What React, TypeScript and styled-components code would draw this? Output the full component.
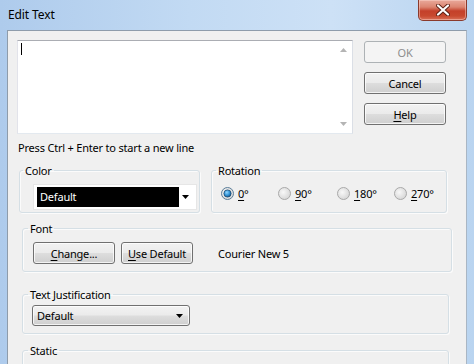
import React from "react";
import styled, { createGlobalStyle } from "styled-components";

const Global = createGlobalStyle`
  html, body { margin: 0; padding: 0; background: #fff; }
  body {
    font-family: "Noto Sans", "Open Sans", sans-serif;
    font-size: 11px;
    letter-spacing: -0.2px;
    color: #000;
  }
  * { box-sizing: border-box; }
`;

const Window = styled.div`
  width: 474px;
  height: 364px;
  display: flex;
  flex-direction: column;
  overflow: hidden;
  background: linear-gradient(90deg, #aecbec 0%, #c2daf3 40%, #cde1f6 70%, #b9d4f0 100%);
`;

const TitleBar = styled.div`
  height: 30px;
  display: flex;
  align-items: flex-start;
  padding: 0 7px 0 8px;
`;

const Title = styled.div`
  flex: 1;
  font-size: 12px;
  letter-spacing: -0.1px;
  line-height: 30px;
  color: #000;
`;

const CloseButton = styled.div`
  width: 49px;
  height: 21px;
  display: flex;
  align-items: center;
  justify-content: center;
  border: 1px solid #8a3a2c;
  border-top: none;
  border-radius: 0 0 5px 5px;
  background: linear-gradient(180deg, #e9a99b 0%, #dc8571 35%, #c4402a 55%, #c8492f 80%, #d9715a 100%);
  box-shadow: inset 0 0 0 1px rgba(255, 220, 210, 0.45);
`;

const Frame = styled.div`
  flex: 1;
  display: flex;
  padding: 0 7px 7px 7px;
`;

const Client = styled.div`
  flex: 1;
  display: flex;
  flex-direction: column;
  overflow: hidden;
  background: #f0f0f0;
  border: 1px solid;
  border-color: #8e9cab #a9b6c4 #7f8c9a #8e9cab;
`;

const TopRow = styled.div`
  display: flex;
  gap: 11px;
  margin-top: 9px;
  padding-left: 9px;
`;

const TextBox = styled.div`
  width: 336px;
  height: 94px;
  display: flex;
  background: #fff;
  border: 1px solid;
  border-color: #abadb3 #dbdfe6 #e3e9ef #e2e3ea;
`;

const TextArea = styled.div`
  flex: 1;
  padding: 2px 0 0 3px;
`;

const Caret = styled.div`
  width: 1px;
  height: 12px;
  background: #000;
`;

const ScrollBar = styled.div`
  width: 17px;
  display: flex;
  flex-direction: column;
  justify-content: space-between;
  align-items: center;
  padding: 7px 0 7px 0;
`;

const ButtonColumn = styled.div`
  display: flex;
  flex-direction: column;
  gap: 9px;
  margin-top: 1px;
`;

const PushButton = styled.div<{ $w: number; $disabled?: boolean }>`
  width: ${(p) => p.$w}px;
  height: 22px;
  display: flex;
  align-items: center;
  justify-content: center;
  border-radius: 3px;
  white-space: nowrap;
  border: 1px solid ${(p) => (p.$disabled ? "#adb2b5" : "#707070")};
  color: ${(p) => (p.$disabled ? "#8d8d8d" : "#000")};
  background: ${(p) =>
    p.$disabled
      ? "#f4f4f4"
      : "linear-gradient(180deg, #f2f2f2 0%, #ebebeb 48%, #dddddd 52%, #cfcfcf 100%)"};
  box-shadow: inset 0 0 0 1px ${(p) => (p.$disabled ? "#f4f4f4" : "rgba(255,255,255,0.75)")};
`;

const Mn = styled.span`
  text-decoration: underline;
  text-underline-offset: 2px;
  text-decoration-thickness: 1px;
`;

const Hint = styled.div`
  margin: 6px 0 0 10px;
  line-height: 15px;
`;

const GroupRow = styled.div`
  display: flex;
  align-items: stretch;
  gap: 11px;
  margin: 8px 0 0 11px;
`;

const Group = styled.fieldset<{ $w: number; $ml?: number; $mt?: number }>`
  width: ${(p) => p.$w}px;
  margin: ${(p) => p.$mt ?? 0}px 0 0 ${(p) => p.$ml ?? 0}px;
  padding: 0;
  min-width: 0;
  flex-shrink: 0;
  border: 1px solid #d5dfe5;
  border-radius: 3px;
  box-shadow: inset 1px 1px 0 #fbfbfb, 1px 1px 0 #fbfbfb;
`;

const Legend = styled.legend<{ $lx: number }>`
  margin-left: ${(p) => p.$lx}px;
  padding: 0 2px;
  line-height: 15px;
`;

const ColorBody = styled.div`
  padding: 6px 2px 2px 13px;
`;

const ColorCombo = styled.div`
  width: 164px;
  height: 26px;
  display: flex;
  align-items: center;
  padding: 0 5px 0 3px;
  background: #fff;
  border: 1px solid #e6e6e6;
`;

const ColorSwatch = styled.div`
  width: 142px;
  height: 20px;
  background: #000;
  color: #fff;
  line-height: 20px;
  padding-left: 3px;
`;

const ArrowSlot = styled.div`
  flex: 1;
  display: flex;
  justify-content: center;
  align-items: center;
`;

const RotationBody = styled.div`
  display: grid;
  grid-template-columns: 57px 59px 57px auto;
  align-items: center;
  padding: 8px 0 11px 9px;
`;

const RadioOption = styled.label`
  display: flex;
  align-items: center;
  gap: 4px;
  line-height: 15px;
`;

const FontBody = styled.div`
  display: flex;
  align-items: center;
  gap: 6px;
  padding: 6px 0 7px 10px;
`;

const FontName = styled.div`
  margin-left: 19px;
`;

const JustBody = styled.div`
  padding: 3px 0 7px 9px;
`;

const DropButton = styled.div`
  width: 158px;
  height: 21px;
  display: flex;
  align-items: center;
  justify-content: space-between;
  padding: 0 6px 0 4px;
  border: 1px solid #707070;
  border-radius: 3px;
  background: linear-gradient(180deg, #f2f2f2 0%, #ebebeb 48%, #dddddd 52%, #cfcfcf 100%);
  box-shadow: inset 0 0 0 1px rgba(255, 255, 255, 0.75);
`;

const StaticBody = styled.div`
  height: 40px;
`;

const DownArrow = ({ color = "#000" }: { color?: string }) => (
  <svg width="7" height="4" viewBox="0 0 7 4">
    <path d="M0 0H7L3.5 4Z" fill={color} />
  </svg>
);

const UpArrow = ({ color = "#000" }: { color?: string }) => (
  <svg width="7" height="4" viewBox="0 0 7 4">
    <path d="M0 4H7L3.5 0Z" fill={color} />
  </svg>
);

const Radio = ({ checked }: { checked?: boolean }) => (
  <svg width="13" height="13" viewBox="0 0 13 13">
    <defs>
      <radialGradient id="rOff" cx="0.4" cy="0.4" r="0.7">
        <stop offset="0" stopColor="#f8f8f8" />
        <stop offset="1" stopColor="#d2d2d2" />
      </radialGradient>
      <radialGradient id="rOn" cx="0.4" cy="0.35" r="0.7">
        <stop offset="0" stopColor="#8fd6ff" />
        <stop offset="0.6" stopColor="#2d8fd3" />
        <stop offset="1" stopColor="#0f4a7d" />
      </radialGradient>
    </defs>
    <circle cx="6.5" cy="6.5" r="6" fill="url(#rOff)" stroke={checked ? "#5a7d99" : "#a9a9a9"} />
    {checked && <circle cx="6.5" cy="6.5" r="3.6" fill="url(#rOn)" stroke="#1b4a72" strokeWidth="0.8" />}
  </svg>
);

const CloseGlyph = () => (
  <svg width="14" height="12" viewBox="0 0 14 12">
    <path d="M2 1.5L12 10.5M12 1.5L2 10.5" stroke="#5b1f14" strokeWidth="4" strokeLinecap="round" />
    <path d="M2 1.5L12 10.5M12 1.5L2 10.5" stroke="#ffffff" strokeWidth="2.2" strokeLinecap="round" />
  </svg>
);

export default function App() {
  return (
    <>
      <Global />
      <Window>
        <TitleBar>
          <Title>Edit Text</Title>
          <CloseButton>
            <CloseGlyph />
          </CloseButton>
        </TitleBar>
        <Frame>
          <Client>
            <TopRow>
              <TextBox>
                <TextArea>
                  <Caret />
                </TextArea>
                <ScrollBar>
                  <UpArrow color="#b4b4b4" />
                  <DownArrow color="#b4b4b4" />
                </ScrollBar>
              </TextBox>
              <ButtonColumn>
                <PushButton $w={82} $disabled>
                  OK
                </PushButton>
                <PushButton $w={82}>Cancel</PushButton>
                <PushButton $w={82}>
                  <Mn>H</Mn>elp
                </PushButton>
              </ButtonColumn>
            </TopRow>
            <Hint>Press Ctrl + Enter to start a new line</Hint>
            <GroupRow>
              <Group $w={181}>
                <Legend $lx={3}>Color</Legend>
                <ColorBody>
                  <ColorCombo>
                    <ColorSwatch>Default</ColorSwatch>
                    <ArrowSlot>
                      <DownArrow />
                    </ArrowSlot>
                  </ColorCombo>
                </ColorBody>
              </Group>
              <Group $w={236}>
                <Legend $lx={4}>Rotation</Legend>
                <RotationBody>
                  <RadioOption>
                    <Radio checked />
                    <span>
                      <Mn>0</Mn>°
                    </span>
                  </RadioOption>
                  <RadioOption>
                    <Radio />
                    <span>
                      <Mn>9</Mn>0°
                    </span>
                  </RadioOption>
                  <RadioOption>
                    <Radio />
                    <span>
                      <Mn>1</Mn>80°
                    </span>
                  </RadioOption>
                  <RadioOption>
                    <Radio />
                    <span>
                      <Mn>2</Mn>70°
                    </span>
                  </RadioOption>
                </RotationBody>
              </Group>
            </GroupRow>
            <Group $w={430} $ml={14} $mt={8}>
              <Legend $lx={5}>Font</Legend>
              <FontBody>
                <PushButton $w={82}>
                  <Mn>C</Mn>hange...
                </PushButton>
                <PushButton $w={72}>
                  <Mn>U</Mn>se Default
                </PushButton>
                <FontName>Courier New 5</FontName>
              </FontBody>
            </Group>
            <Group $w={427} $ml={14} $mt={15}>
              <Legend $lx={5}>Text Justification</Legend>
              <JustBody>
                <DropButton>
                  <span>Default</span>
                  <DownArrow />
                </DropButton>
              </JustBody>
            </Group>
            <Group $w={427} $ml={14} $mt={9}>
              <Legend $lx={5}>Static</Legend>
              <StaticBody />
            </Group>
          </Client>
        </Frame>
      </Window>
    </>
  );
}
